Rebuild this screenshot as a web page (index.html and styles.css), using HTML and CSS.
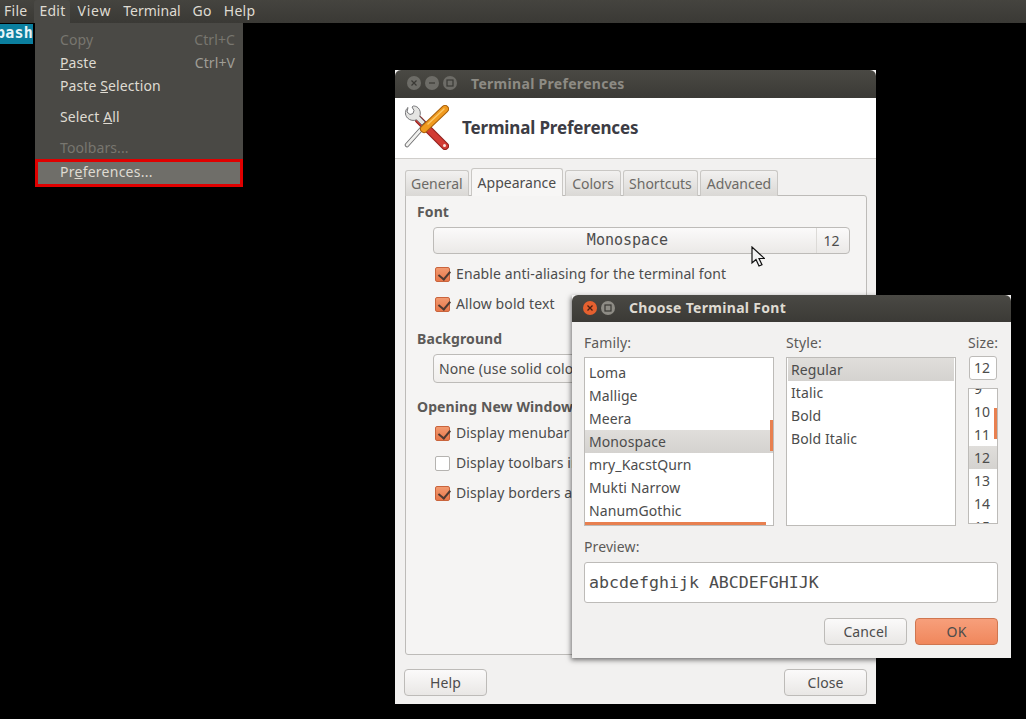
FILE: index.html
```html
<!DOCTYPE html>
<html lang="en">
<head>
    <meta charset="UTF-8">
    <meta name="viewport" content="width=device-width, initial-scale=1.0">
    <title>Terminal Preferences</title>
    <link rel="stylesheet" href="styles.css">
</head>
<body>
    <div class="menubar">
        <span class="menubar-item">File</span>
        <span class="menubar-item open">Edit</span>
        <span class="menubar-item">View</span>
        <span class="menubar-item">Terminal</span>
        <span class="menubar-item">Go</span>
        <span class="menubar-item">Help</span>
    </div>
    <div class="term-tab"><span>bash</span></div>

    <div class="menu">
        <div class="menu-item disabled"><span>Copy</span><span>Ctrl+C</span></div>
        <div class="menu-item"><span><u>P</u>aste</span><span class="shortcut">Ctrl+V</span></div>
        <div class="menu-item"><span>Paste <u>S</u>election</span></div>
        <div class="menu-gap"></div>
        <div class="menu-item"><span>Select <u>A</u>ll</span></div>
        <div class="menu-gap"></div>
        <div class="menu-item disabled"><span>Toolbars...</span></div>
        <div class="menu-item selected"><span>Pr<u>e</u>ferences...</span></div>
    </div>

    <div class="window prefs">
        <div class="titlebar">
            <div class="wm-buttons">
                <span class="wm-btn">
                    <svg viewBox="0 0 14 14"><path d="M4.5 4.5l5 5M9.5 4.5l-5 5" stroke="#3a3935" stroke-width="1.2"/></svg>
                </span>
                <span class="wm-btn">
                    <svg viewBox="0 0 14 14"><path d="M4 7h6" stroke="#3a3935" stroke-width="1.2"/></svg>
                </span>
                <span class="wm-btn">
                    <svg viewBox="0 0 14 14"><rect x="4" y="4" width="6" height="6" fill="none" stroke="#3a3935" stroke-width="1.2"/></svg>
                </span>
            </div>
            <span class="title-text dim">Terminal Preferences</span>
        </div>
        <div class="prefs-header">
            <svg class="tools-icon" viewBox="0 0 45 45">
                <path d="M15 15L41 41" stroke="#8f1f1c" stroke-width="8" stroke-linecap="round"/>
                <path d="M15 15L41 41" stroke="#d23b34" stroke-width="6" stroke-linecap="round"/>
                <circle cx="40.5" cy="40.5" r="1.5" fill="#f5e5e0"/>
                <path d="M4 2.5C.8 5 .6 10 3.5 13c2.5 2.6 6.3 3 9 1.8L18 20l3-3-5.300-5.500C17 8.500 16.300 4.800 14 2.700 12.600 1.500 11 1 9.500 1L8 2l2 3.500-1 3-3 1L3 7z" fill="#e4e4e2" stroke="#77777a" stroke-width="1"/>
                <path d="M20 21L3 40" stroke="#6e6e70" stroke-width="4.500" stroke-linecap="round"/>
                <path d="M20 21L3 40" stroke="#f0f0ee" stroke-width="2.700" stroke-linecap="round"/>
                <path d="M20 24L41 4" stroke="#a8600c" stroke-width="8" stroke-linecap="round"/>
                <path d="M20 24L41 4" stroke="#f09a1f" stroke-width="6" stroke-linecap="round"/>
                <path d="M24 19L40 4" stroke="#fbc766" stroke-width="1.500" stroke-linecap="round"/>
            </svg>
            <h1>Terminal Preferences</h1>
        </div>
        <div class="prefs-body">
            <div class="tabs">
                <span class="tab">General</span>
                <span class="tab active roomy">Appearance</span>
                <span class="tab roomy">Colors</span>
                <span class="tab">Shortcuts</span>
                <span class="tab roomy">Advanced</span>
            </div>
            <div class="tab-panel">
                <div class="group-title">Font</div>
                <div class="font-button"><span class="font-name">Monospace</span><span class="font-size">12</span></div>
                <label class="check-row"><span class="check on"></span>Enable anti-aliasing for the terminal font</label>
                <label class="check-row"><span class="check on"></span>Allow bold text</label>
                <div class="group-title group-bg">Background</div>
                <div class="combo">None (use solid color)</div>
                <div class="group-title group-open">Opening New Windows</div>
                <label class="check-row first"><span class="check on"></span>Display menubar in new windows</label>
                <label class="check-row"><span class="check"></span>Display toolbars in new windows</label>
                <label class="check-row"><span class="check on"></span>Display borders around new windows</label>
            </div>
            <div class="prefs-actions">
                <span class="btn">Help</span>
                <span class="btn">Close</span>
            </div>
        </div>
    </div>

    <svg class="pointer" viewBox="0 0 14 22">
        <path d="M1 1v16l4-3.500 3 6.500 3-1.300-3-6.200h5.500z" fill="#f2f2f2" stroke="#111" stroke-width="1.200"/>
    </svg>

    <div class="window chooser">
        <div class="titlebar short">
            <div class="wm-buttons">
                <span class="wm-btn close">
                    <svg viewBox="0 0 14 14"><path d="M4.500 4.500l5 5M9.500 4.500l-5 5" stroke="#4a2012" stroke-width="1.300"/></svg>
                </span>
                <span class="wm-btn lit">
                    <svg viewBox="0 0 14 14"><rect x="4" y="4" width="6" height="6" fill="none" stroke="#3a3935" stroke-width="1.200"/></svg>
                </span>
            </div>
            <span class="title-text">Choose Terminal Font</span>
        </div>
        <div class="chooser-body">
            <div class="chooser-columns">
                <div class="col col-family">
                    <div class="col-label">Family:</div>
                    <div class="list">
                        <div class="list-row">Loma</div>
                        <div class="list-row">Mallige</div>
                        <div class="list-row">Meera</div>
                        <div class="list-row selected">Monospace</div>
                        <div class="list-row">mry_KacstQurn</div>
                        <div class="list-row">Mukti Narrow</div>
                        <div class="list-row">NanumGothic</div>
                        <span class="vscroll family-vscroll"></span>
                        <span class="hscroll"></span>
                    </div>
                </div>
                <div class="col col-style">
                    <div class="col-label">Style:</div>
                    <div class="list style-list">
                        <div class="list-row selected">Regular</div>
                        <div class="list-row">Italic</div>
                        <div class="list-row">Bold</div>
                        <div class="list-row">Bold Italic</div>
                    </div>
                </div>
                <div class="col col-size">
                    <div class="col-label">Size:</div>
                    <div class="size-entry">12</div>
                    <div class="list size-list">
                        <div class="size-rows">
                            <div class="list-row">9</div>
                            <div class="list-row">10</div>
                            <div class="list-row">11</div>
                            <div class="list-row selected">12</div>
                            <div class="list-row">13</div>
                            <div class="list-row">14</div>
                            <div class="list-row">15</div>
                        </div>
                        <span class="vscroll size-vscroll"></span>
                    </div>
                </div>
            </div>
            <div class="col-label preview-label">Preview:</div>
            <div class="preview">abcdefghijk ABCDEFGHIJK</div>
            <div class="chooser-actions">
                <span class="btn">Cancel</span>
                <span class="btn primary">OK</span>
            </div>
        </div>
    </div>
</body>
</html>
```

FILE: styles.css
```css
* {
    margin: 0;
    padding: 0;
    box-sizing: border-box;
}
html, body {
    height: 100%;
    overflow: hidden;
}
body {
    position: relative;
    background-color: #000;
    font-family: "Noto Sans", "Open Sans", sans-serif;
    font-size: 14px;
    letter-spacing: 0.1px;
    color: #4c4c4c;
}

/* top of the terminal */
.menubar {
    display: flex;
    gap: 2px;
    height: 23px;
    background: linear-gradient(#45443f, #3a3935);
    color: #dfdbd2;
}
.menubar-item {
    padding: 0 5px;
    line-height: 21px;
    letter-spacing: 0.25px;
}
.menubar-item:first-child {
    padding-left: 4px;
}
.menubar-item:nth-child(3) {
    letter-spacing: 0.8px;
}
.menubar-item:nth-child(4) {
    letter-spacing: 0;
}
.menubar-item.open {
    background: #4a4945;
    border-radius: 3px 3px 0 0;
}
.term-tab {
    width: 33px;
    height: 20px;
    margin-top: 1px;
    overflow: hidden;
    display: flex;
    justify-content: flex-end;
    background: #0b7f9f;
}
.term-tab span {
    font-family: "DejaVu Sans Mono", monospace;
    font-weight: bold;
    font-size: 15px;
    letter-spacing: 0.2px;
    line-height: 19px;
    color: #e8f4f7;
}

/* edit menu */
.menu {
    position: absolute;
    left: 35px;
    top: 23px;
    width: 208px;
    height: 163px;
    padding-top: 5px;
    background: #4a4945;
    color: #dfdbd2;
}
.menu-item {
    display: flex;
    justify-content: space-between;
    height: 23px;
    padding: 0 8px 0 25px;
    line-height: 23px;
}
.menu-item.disabled {
    color: #78766f;
}
.menu-item .shortcut {
    color: #a09e96;
}
.menu-gap {
    height: 8px;
}
.menu-item.selected {
    height: 28px;
    border: 3px solid #e00000;
    padding-left: 22px;
    line-height: 19px;
    letter-spacing: 0.25px;
    background: #6f6e69;
}

/* windows */
.window {
    position: absolute;
    display: flex;
    flex-direction: column;
    background: #f2f1f0;
}
.prefs {
    left: 395px;
    top: 70px;
    width: 481px;
    height: 634px;
}
.chooser {
    left: 572px;
    top: 295px;
    width: 439px;
    height: 363px;
    box-shadow: -1px 2px 5px rgba(0, 0, 0, 0.55);
}
.titlebar {
    display: flex;
    align-items: center;
    flex: none;
    height: 28px;
    padding: 0 0 2px 12px;
    background: linear-gradient(#4a4944, #3b3a36);
    border-radius: 6px 6px 0 0;
}
.titlebar.short {
    height: 27px;
    padding-left: 11px;
}
.wm-buttons {
    display: flex;
    gap: 4px;
    width: 64px;
}
.short .wm-buttons {
    width: 46px;
}
.wm-btn {
    width: 14px;
    height: 14px;
    border-radius: 50%;
    background: #6d6c67;
}
.wm-btn svg {
    display: block;
}
.wm-btn.close {
    background: #e5602f;
}
.wm-btn.lit {
    background: #8e8c85;
}
.title-text {
    font-weight: bold;
    letter-spacing: 0.3px;
    color: #dfdbd2;
}
.title-text.dim {
    color: #8d8b84;
}
.prefs-header {
    display: flex;
    align-items: center;
    flex: none;
    height: 61px;
    padding-left: 9px;
    padding-bottom: 1px;
    background: #fff;
    border-bottom: 1px solid #d0cecb;
}
.tools-icon {
    width: 45px;
    height: 45px;
    margin-right: 13px;
}
.prefs-header h1 {
    font-size: 17px;
    letter-spacing: -0.15px;
    font-weight: bold;
    color: #3c3c44;
}
.prefs-body {
    display: flex;
    flex-direction: column;
    flex: 1;
    padding: 9px 9px 8px 10px;
}

/* tabs */
.tabs {
    display: flex;
    align-items: flex-end;
    gap: 2px;
    height: 28px;
    margin-bottom: -1px;
}
.tab {
    position: relative;
    height: 26px;
    padding: 0 5px;
    line-height: 25px;
    letter-spacing: 0;
    background: linear-gradient(#f2f1f0, #dad8d5);
    border: 1px solid #c9c7c4;
    border-bottom: none;
    border-radius: 3px 3px 0 0;
    color: #6c6a66;
}
.tab.roomy {
    padding: 0 6px;
}
.tab.active {
    height: 28px;
    z-index: 1;
    background: #f7f6f5;
    line-height: 27px;
    color: #4c4c4c;
}
.tab-panel {
    height: 460px;
    padding: 7px 11px;
    background: #f5f4f3;
    border: 1px solid #bdbbb8;
    border-radius: 0 3px 3px 3px;
}
.group-title {
    font-weight: bold;
    line-height: 18px;
    color: #5c5a58;
}
.group-bg {
    margin-top: 16px;
}
.group-open {
    margin-top: 15px;
}
.font-button {
    display: flex;
    height: 27px;
    margin: 6px 5px 0 16px;
    background: linear-gradient(#fbfafa, #ebe9e7);
    border: 1px solid #bdbbb8;
    border-radius: 4px;
    line-height: 25px;
}
.font-name {
    flex: 1;
    padding-left: 5px;
    text-align: center;
    font-family: "DejaVu Sans Mono", monospace;
    font-size: 15px;
    letter-spacing: 0;
    border-right: 1px solid #dcdad7;
}
.font-size {
    width: 32px;
    padding-right: 3px;
    text-align: center;
}
.check-row {
    display: flex;
    align-items: center;
    gap: 6px;
    height: 20px;
    margin: 10px 0 0 18px;
    line-height: 20px;
    white-space: nowrap;
}
.check-row.first {
    margin-top: 7px;
}
.check {
    display: block;
    position: relative;
    flex: none;
    width: 15px;
    height: 15px;
    background: #fff;
    border: 1px solid #b5b3b0;
    border-radius: 2px;
}
.check.on {
    border: 1px solid #c9643c;
    background: linear-gradient(#f29a70, #e8774a);
}
.check.on::after {
    content: "";
    position: absolute;
    left: 2px;
    top: 0;
    width: 9px;
    height: 6px;
    border-left: 2px solid #4d3a32;
    border-bottom: 2px solid #4d3a32;
    transform: rotate(-50deg) translate(-1px, 2px);
}
.combo {
    width: 300px;
    height: 29px;
    margin: 6px 0 0 16px;
    padding-left: 5px;
    line-height: 27px;
    background: linear-gradient(#fbfafa, #f0eeec);
    border: 1px solid #bdbbb8;
    border-radius: 4px;
}
.prefs-actions {
    display: flex;
    justify-content: space-between;
    margin: 14px 0 0 -1px;
}

/* buttons */
.btn {
    width: 83px;
    height: 27px;
    text-align: center;
    line-height: 25px;
    background: linear-gradient(#fbfafa, #e9e7e5);
    border: 1px solid #bdbbb8;
    border-radius: 4px;
}
.btn.primary {
    background: linear-gradient(#f79f7b, #f0875c);
    border-color: #cf7650;
}

/* font chooser */
.chooser-body {
    display: flex;
    flex-direction: column;
    flex: 1;
    padding: 12px 13px 0 12px;
}
.chooser-columns {
    display: flex;
    height: 192px;
}
.col-label {
    height: 23px;
    line-height: 18px;
    color: #5c5a58;
}
.col-family {
    width: 190px;
    margin-right: 12px;
}
.col-style {
    width: 170px;
    margin-right: 12px;
}
.col-size {
    width: 30px;
}
.list {
    position: relative;
    height: 169px;
    padding-top: 3px;
    overflow: hidden;
    background: #fff;
    border: 1px solid #bdbbb8;
    color: #4c4c4c;
}
.list-row {
    height: 23px;
    padding-left: 4px;
    line-height: 23px;
}
.list-row.selected {
    background: linear-gradient(#e0dedb, #d4d2cf);
}
.style-list {
    padding: 0 1px;
}
.style-list .list-row {
    padding-left: 3px;
}
.size-entry {
    height: 24px;
    margin: -1px 1px 8px 1px;
    padding-left: 4px;
    line-height: 22px;
    background: #fff;
    border: 1px solid #bdbbb8;
    border-radius: 3px;
}
.size-list {
    height: 136px;
    padding: 0;
}
.size-rows {
    margin-top: -12px;
}
.size-rows .list-row {
    padding-left: 5px;
}
.vscroll {
    position: absolute;
    right: 0;
    width: 3px;
    background: #e88050;
}
.family-vscroll {
    top: 62px;
    height: 31px;
}
.size-vscroll {
    top: 19px;
    height: 31px;
}
.hscroll {
    position: absolute;
    left: 0;
    bottom: 0;
    width: 181px;
    height: 3px;
    background: #e88050;
}
.preview-label {
    margin-top: 12px;
    height: 24px;
}
.preview {
    height: 41px;
    padding-left: 4px;
    line-height: 39px;
    font-family: "DejaVu Sans Mono", monospace;
    font-size: 16.6px;
    letter-spacing: 0;
    background: #fff;
    border: 1px solid #bdbbb8;
    border-radius: 3px;
}
.chooser-actions {
    display: flex;
    justify-content: flex-end;
    gap: 8px;
    margin-top: 15px;
}

/* mouse pointer */
.pointer {
    position: absolute;
    left: 751px;
    top: 246px;
    width: 14px;
    height: 22px;
}
```
